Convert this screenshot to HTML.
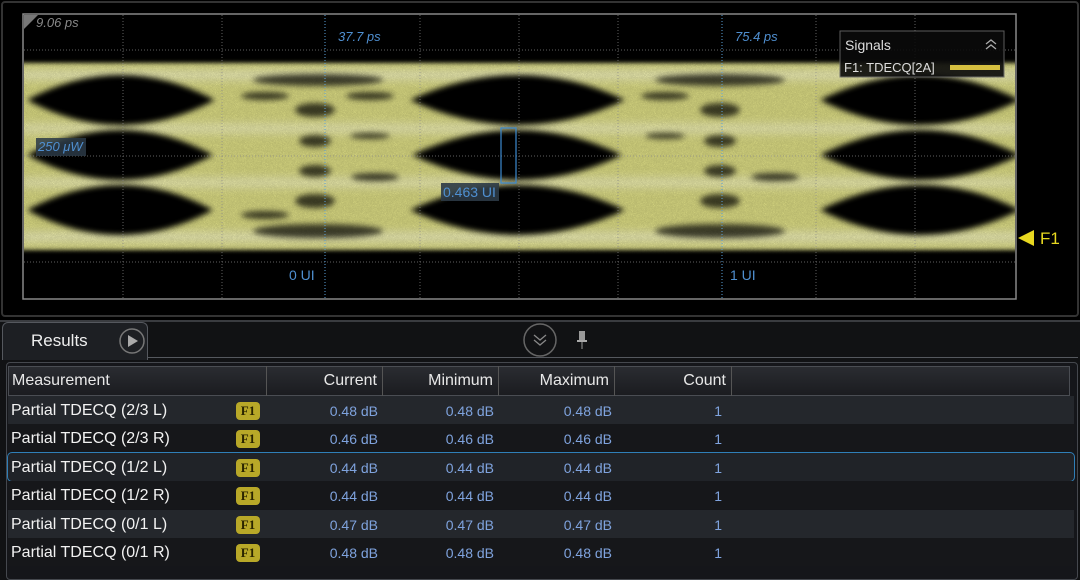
<!DOCTYPE html>
<html><head><meta charset="utf-8"><style>
*{margin:0;padding:0;box-sizing:border-box}
body{width:1080px;height:580px;background:#000;overflow:hidden;font-family:"Liberation Sans",sans-serif;position:relative}
.abs{position:absolute}
.lbl{position:absolute;color:#4f8fd0;font-size:13px;font-style:italic}
.bottom{position:absolute;left:0;top:320px;width:1080px;height:260px;background:#111214;border-top:2px solid #3a3c40}
.tab{position:absolute;left:2px;top:322px;width:146px;height:38px;background:#1d1f23;border:1px solid #55585e;border-bottom:none;border-radius:6px 6px 0 0}
.tbl{position:absolute;left:6px;top:362px;width:1072px;height:218px;background:#15161a;border:1px solid #45484e;border-radius:4px}
.hdr{position:absolute;left:8px;top:366px;width:1062px;height:30px;background:linear-gradient(#2a2c31,#1b1c20);border:1px solid #4a4d53}
.hc{position:absolute;top:366px;height:30px;line-height:30px;color:#e8e8e8;font-size:16px;text-align:right;padding-right:5px;border-right:1px solid #555}
.row{position:absolute;left:8px;width:1066px;height:28px}
.row span{position:absolute;top:1px;line-height:28px;font-size:16px}
.nm{left:3px;color:#f2f2f2}
.v{color:#7fa3de;font-size:14px!important;text-align:right}
.f1{left:228px;top:6px!important;width:24px;height:18px;line-height:18px!important;background:#b8a828;color:#2a2400;border-radius:4px;font-size:13px!important;text-align:center;font-weight:bold;font-family:"Liberation Serif",serif}
</style></head><body>
<svg class="abs" style="left:0;top:0" width="1080" height="320">
<defs>
<filter id="b3"><feGaussianBlur stdDeviation="3"/></filter>
<filter id="b2"><feGaussianBlur stdDeviation="2"/></filter>
<filter id="b5"><feGaussianBlur stdDeviation="5"/></filter>
<filter id="nz"><feTurbulence baseFrequency="0.9" numOctaves="1" seed="3"/><feColorMatrix values="0 0 0 0 0  0 0 0 0 0  0 0 0 0 0  0 0 0 -1.2 0.9"/></filter>
<clipPath id="pc"><rect x="24" y="15" width="991" height="283"/></clipPath>
</defs>
<rect x="2" y="2" width="1076" height="314" fill="#000" stroke="#333" stroke-width="2" rx="3"/>
<rect x="23" y="14" width="993" height="285" fill="none" stroke="#888" stroke-width="1.5"/>
<g clip-path="url(#pc)">
<rect x="10" y="63" width="1020" height="187" fill="#dcdc84" filter="url(#b2)"/>
<g fill="#fafad8" filter="url(#b5)" opacity="0.85">
<rect x="20" y="71" width="1000" height="8"/>
<rect x="20" y="125" width="1000" height="7"/>
<rect x="20" y="179" width="1000" height="7"/>
<rect x="20" y="233" width="1000" height="8"/>
</g>
<g fill="#000" filter="url(#b3)">
<path d="M27,100 Q120,50 215,100 Q120,150 27,100Z"/>
<path d="M27,155 Q120,105 213,155 Q120,205 27,155Z"/>
<path d="M27,210 Q120,160 213,210 Q120,260 27,210Z"/>
<path d="M410,100 Q518,50 625,100 Q518,150 410,100Z"/>
<path d="M412,155 Q518,105 622,155 Q518,205 412,155Z"/>
<path d="M410,210 Q518,160 625,210 Q518,260 410,210Z"/>
<path d="M820,100 Q920,50 1020,100 Q920,150 820,100Z"/>
<path d="M820,155 Q920,105 1020,155 Q920,205 820,155Z"/>
<path d="M820,210 Q920,160 1020,210 Q920,260 820,210Z"/>
</g>
<g fill="#000" opacity="0.7" filter="url(#b3)">
<ellipse cx="318" cy="80" rx="65" ry="6"/><ellipse cx="318" cy="231" rx="65" ry="7"/>
<ellipse cx="315" cy="110" rx="20" ry="7"/><ellipse cx="315" cy="141" rx="16" ry="6"/>
<ellipse cx="315" cy="171" rx="16" ry="6"/><ellipse cx="315" cy="201" rx="20" ry="7"/>
<ellipse cx="720" cy="80" rx="65" ry="6"/><ellipse cx="720" cy="231" rx="65" ry="7"/>
<ellipse cx="720" cy="110" rx="20" ry="7"/><ellipse cx="720" cy="141" rx="16" ry="6"/>
<ellipse cx="720" cy="171" rx="16" ry="6"/><ellipse cx="720" cy="201" rx="20" ry="7"/>
<ellipse cx="370" cy="96" rx="24" ry="4"/><ellipse cx="375" cy="177" rx="24" ry="4"/>
<ellipse cx="265" cy="96" rx="24" ry="4"/><ellipse cx="265" cy="215" rx="24" ry="4"/>
<ellipse cx="665" cy="96" rx="24" ry="4"/><ellipse cx="775" cy="177" rx="24" ry="4"/>
<ellipse cx="370" cy="136" rx="20" ry="3"/><ellipse cx="665" cy="136" rx="20" ry="3"/>
</g>
<rect x="24" y="60" width="991" height="195" fill="#000" filter="url(#nz)" opacity="0.18"/>
<g stroke="#888" stroke-width="1" stroke-dasharray="1 2" opacity="0.7">
<line x1="123" y1="15" x2="123" y2="298"/><line x1="222" y1="15" x2="222" y2="298"/>
<line x1="420" y1="15" x2="420" y2="298"/><line x1="519" y1="15" x2="519" y2="298"/>
<line x1="618" y1="15" x2="618" y2="298"/><line x1="816" y1="15" x2="816" y2="298"/>
<line x1="915" y1="15" x2="915" y2="298"/>
<line x1="24" y1="50" x2="1015" y2="50"/><line x1="24" y1="156" x2="1015" y2="156"/>
<line x1="24" y1="262" x2="1015" y2="262"/>
</g>
<g stroke="#5aa0d8" stroke-width="1" stroke-dasharray="1 2">
<line x1="325" y1="15" x2="325" y2="298"/><line x1="722" y1="15" x2="722" y2="298"/>
</g>
<rect x="501" y="128" width="15" height="55" fill="none" stroke="#3c8ad0" stroke-width="1.2"/>
</g>
<path d="M24,15 L38,15 L24,29Z" fill="#777"/>
<rect x="36" y="138" width="50" height="18" fill="#2c3a46" opacity="0.85"/>
<rect x="441" y="183" width="58" height="18" fill="#2c3a46" opacity="0.9"/>
<rect x="840" y="31" width="164" height="46" fill="#0a0a0a" stroke="#666" opacity="0.9"/>
<path d="M986,44 l5,-4 l5,4 M986,49 l5,-4 l5,4" stroke="#aaa" fill="none" stroke-width="1.3"/>
<rect x="950" y="65" width="50" height="5" fill="#d6bf40"/>
<path d="M1018,238 L1034,230 L1034,246Z" fill="#e8d820"/>
</svg>
<div class="lbl" style="left:36px;top:15px;color:#888">9.06 ps</div>
<div class="lbl" style="left:338px;top:29px">37.7 ps</div>
<div class="lbl" style="left:735px;top:29px">75.4 ps</div>
<div class="lbl" style="left:38px;top:139px">250 μW</div>
<div class="lbl" style="left:443px;top:184px;font-style:normal;font-size:14px">0.463 UI</div>
<div class="lbl" style="left:289px;top:267px;font-style:normal;font-size:14px">0 UI</div>
<div class="lbl" style="left:730px;top:267px;font-style:normal;font-size:14px">1 UI</div>
<div class="abs" style="left:845px;top:37px;color:#ddd;font-size:14px">Signals</div>
<div class="abs" style="left:844px;top:60px;color:#ddd;font-size:13px">F1: TDECQ[2A]</div>
<div class="abs" style="left:1040px;top:229px;color:#e8d820;font-size:17px">F1</div>

<div class="bottom"></div>
<div class="abs" style="left:148px;top:357px;width:930px;height:1px;background:#55585e"></div>
<div class="tab"></div>
<div class="abs" style="left:31px;top:331px;color:#eee;font-size:17px">Results</div>
<svg class="abs" style="left:118px;top:327px" width="28" height="28"><circle cx="14" cy="14" r="12" fill="none" stroke="#777" stroke-width="1.5"/><path d="M10,8 L20,14 L10,20Z" fill="#aaa"/></svg>
<svg class="abs" style="left:522px;top:322px" width="36" height="36"><circle cx="18" cy="18" r="16" fill="none" stroke="#666" stroke-width="1.5"/><path d="M12,13 l6,5 l6,-5 M12,18 l6,5 l6,-5" fill="none" stroke="#888" stroke-width="1.3"/></svg>
<svg class="abs" style="left:574px;top:330px" width="16" height="20"><rect x="5" y="1" width="6" height="10" fill="#999"/><rect x="3" y="10" width="10" height="2" fill="#aaa"/><line x1="8" y1="12" x2="8" y2="19" stroke="#999"/></svg>
<div class="tbl"></div>
<div class="hdr"></div>
<div class="hc" style="left:8px;width:259px;text-align:left;padding-left:4px">Measurement</div>
<div class="hc" style="left:267px;width:116px">Current</div>
<div class="hc" style="left:383px;width:116px">Minimum</div>
<div class="hc" style="left:499px;width:116px">Maximum</div>
<div class="hc" style="left:615px;width:117px">Count</div>

<div class="row" style="top:396px;background:#24272c"><span class="nm">Partial TDECQ (2/3 L)</span><span class="f1">F1</span><span class="v" style="left:260px;width:110px">0.48 dB</span><span class="v" style="left:376px;width:110px">0.48 dB</span><span class="v" style="left:492px;width:112px">0.48 dB</span><span class="v" style="left:610px;width:104px">1</span></div>
<div class="row" style="top:424px;background:#16171a"><span class="nm">Partial TDECQ (2/3 R)</span><span class="f1">F1</span><span class="v" style="left:260px;width:110px">0.46 dB</span><span class="v" style="left:376px;width:110px">0.46 dB</span><span class="v" style="left:492px;width:112px">0.46 dB</span><span class="v" style="left:610px;width:104px">1</span></div>
<div class="row" style="top:453px;background:#202328;box-shadow:0 0 0 1px #2f7fb8;border-radius:4px"><span class="nm">Partial TDECQ (1/2 L)</span><span class="f1">F1</span><span class="v" style="left:260px;width:110px">0.44 dB</span><span class="v" style="left:376px;width:110px">0.44 dB</span><span class="v" style="left:492px;width:112px">0.44 dB</span><span class="v" style="left:610px;width:104px">1</span></div>
<div class="row" style="top:481px;background:#16171a"><span class="nm">Partial TDECQ (1/2 R)</span><span class="f1">F1</span><span class="v" style="left:260px;width:110px">0.44 dB</span><span class="v" style="left:376px;width:110px">0.44 dB</span><span class="v" style="left:492px;width:112px">0.44 dB</span><span class="v" style="left:610px;width:104px">1</span></div>
<div class="row" style="top:510px;background:#24272c"><span class="nm">Partial TDECQ (0/1 L)</span><span class="f1">F1</span><span class="v" style="left:260px;width:110px">0.47 dB</span><span class="v" style="left:376px;width:110px">0.47 dB</span><span class="v" style="left:492px;width:112px">0.47 dB</span><span class="v" style="left:610px;width:104px">1</span></div>
<div class="row" style="top:538px;background:#16171a"><span class="nm">Partial TDECQ (0/1 R)</span><span class="f1">F1</span><span class="v" style="left:260px;width:110px">0.48 dB</span><span class="v" style="left:376px;width:110px">0.48 dB</span><span class="v" style="left:492px;width:112px">0.48 dB</span><span class="v" style="left:610px;width:104px">1</span></div>
</body></html>
